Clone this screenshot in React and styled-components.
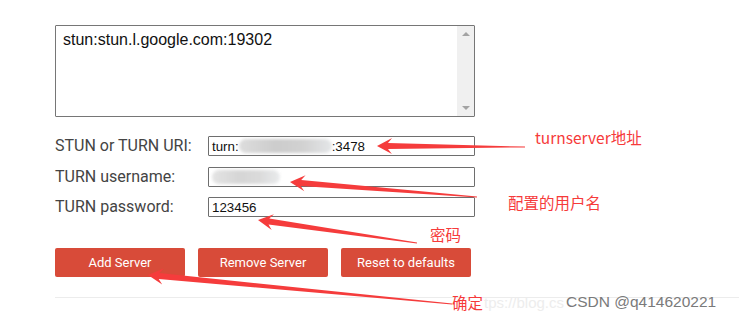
import React from 'react';
import styled, { createGlobalStyle } from 'styled-components';

const Global = createGlobalStyle`
  body {
    margin: 0;
    background: #fff;
    font-family: Roboto, "Liberation Sans", sans-serif;
  }
`;

const Page = styled.div`
  position: relative;
  width: 739px;
  height: 319px;
  overflow: hidden;
  padding: 25px 0 0 55px;
  box-sizing: border-box;
`;

const ServerBox = styled.div`
  display: flex;
  width: 420px;
  height: 92px;
  box-sizing: border-box;
  border: 1px solid #767676;
  border-radius: 1px;
`;

const ServerText = styled.div`
  flex: 1;
  padding: 5px 7px;
  font-family: "Liberation Sans", Arial, sans-serif;
  font-size: 16px;
  color: #111;
`;

const Scrollbar = styled.div`
  width: 17px;
  background: #f0f0f0;
  display: flex;
  flex-direction: column;
  justify-content: space-between;
  align-items: center;
  padding: 6px 0;
  box-sizing: border-box;
`;

const Arrow = styled.span`
  width: 0;
  height: 0;
  border-left: 4px solid transparent;
  border-right: 4px solid transparent;
  ${p => p.up ? 'border-bottom: 4px solid #a3a3a3;' : 'border-top: 4px solid #a3a3a3;'}
`;

const Fields = styled.div`
  display: grid;
  grid-template-columns: 153px 267px;
  row-gap: 10.5px;
  margin-top: 19px;
`;

const Label = styled.label`
  font-size: 16px;
  color: #444;
  line-height: 20px;
`;

const Input = styled.div`
  height: 20px;
  box-sizing: border-box;
  border: 1px solid #6e6e6e;
  border-radius: 1px;
  padding: 0 3px;
  display: flex;
  align-items: center;
  font-family: "Liberation Sans", Arial, sans-serif;
  font-size: 13.33px;
  color: #111;
`;

const Blur = styled.span`
  display: inline-block;
  width: ${p => p.w}px;
  height: 14px;
  border-radius: 7px;
  background: linear-gradient(90deg, #ddd, #ccc 40%, #d2d2d2 70%, #e4e6e8);
  filter: blur(1.5px);
  opacity: ${p => p.o || 1};
`;

const Buttons = styled.div`
  display: flex;
  gap: 13px;
  margin-top: 31px;
`;

const Button = styled.button`
  width: 130px;
  height: 29px;
  border: none;
  border-radius: 2px;
  background: #d84b39;
  color: #fff;
  font-family: Roboto, "Liberation Sans", sans-serif;
  font-size: 13px;
  font-weight: 400;
  padding: 0;
`;

const Rule = styled.hr`
  margin: 20px 0 0;
  border: none;
  border-top: 1px solid #ececec;
`;

const Note = styled.span`
  position: absolute;
  left: ${p => p.x}px;
  top: ${p => p.y}px;
  font-family: "Noto Sans CJK SC", sans-serif;
  font-size: 15.5px;
  line-height: 18px;
  color: #f63a3a;
  white-space: nowrap;
`;

const Mark = styled.span`
  position: absolute;
  left: ${p => p.x}px;
  top: ${p => p.y}px;
  font-family: "Liberation Sans", Arial, sans-serif;
  font-size: ${p => p.size}px;
  color: ${p => p.color};
  white-space: nowrap;
`;

const Overlay = styled.svg`
  position: absolute;
  left: 0;
  top: 0;
  pointer-events: none;
`;

// tapered arrow polygon, tip -> tail
const arrowPoints = (tip, tail) => {
  const [tx, ty] = tip;
  const [ex, ey] = tail;
  const dx = ex - tx, dy = ey - ty;
  const len = Math.hypot(dx, dy);
  const ux = dx / len, uy = dy / len;
  const nx = -uy, ny = ux;
  const headLen = 15, headW = 8, shaftW = 3;
  const bx = tx + ux * headLen, by = ty + uy * headLen;
  const nb = [tx + ux * (headLen - 4), ty + uy * (headLen - 4)];
  const pts = [
    [tx, ty],
    [bx + nx * headW, by + ny * headW],
    [nb[0] + nx * shaftW, nb[1] + ny * shaftW],
    [ex + nx * 0.4, ey + ny * 0.4],
    [ex - nx * 0.4, ey - ny * 0.4],
    [nb[0] - nx * shaftW, nb[1] - ny * shaftW],
    [bx - nx * headW, by - ny * headW],
  ];
  return pts.map(p => p.map(v => v.toFixed(1)).join(',')).join(' ');
};

const arrows = [
  [[377, 146], [525, 147]],
  [[290, 182], [477, 197]],
  [[258, 220], [417, 243]],
  [[148, 275], [452, 304]],
];

const App = () => (
  <Page>
    <Global />
    <ServerBox>
      <ServerText>stun:stun.l.google.com:19302</ServerText>
      <Scrollbar>
        <Arrow up />
        <Arrow />
      </Scrollbar>
    </ServerBox>

    <Fields>
      <Label>STUN or TURN URI:</Label>
      <Input>turn:<Blur w={93} />:3478</Input>
      <Label>TURN username:</Label>
      <Input><Blur w={68} o={0.8} /></Input>
      <Label>TURN password:</Label>
      <Input>123456</Input>
    </Fields>

    <Buttons>
      <Button>Add Server</Button>
      <Button>Remove Server</Button>
      <Button>Reset to defaults</Button>
    </Buttons>

    <Rule />

    <Mark x={484} y={294} size={15} color="#ededed">tps://blog.cs</Mark>
    <Mark x={566} y={293} size={15.5} color="#7a7a7a">CSDN @q414620221</Mark>

    <Overlay width="739" height="319">
      {arrows.map(([tip, tail], i) => (
        <polygon key={i} points={arrowPoints(tip, tail)} fill="#f53c3c" />
      ))}
    </Overlay>

    <Note x={535} y={128}>turnserver地址</Note>
    <Note x={508} y={193}>配置的用户名</Note>
    <Note x={430} y={225}>密码</Note>
    <Note x={452} y={293}>确定</Note>
  </Page>
);

export default App;
